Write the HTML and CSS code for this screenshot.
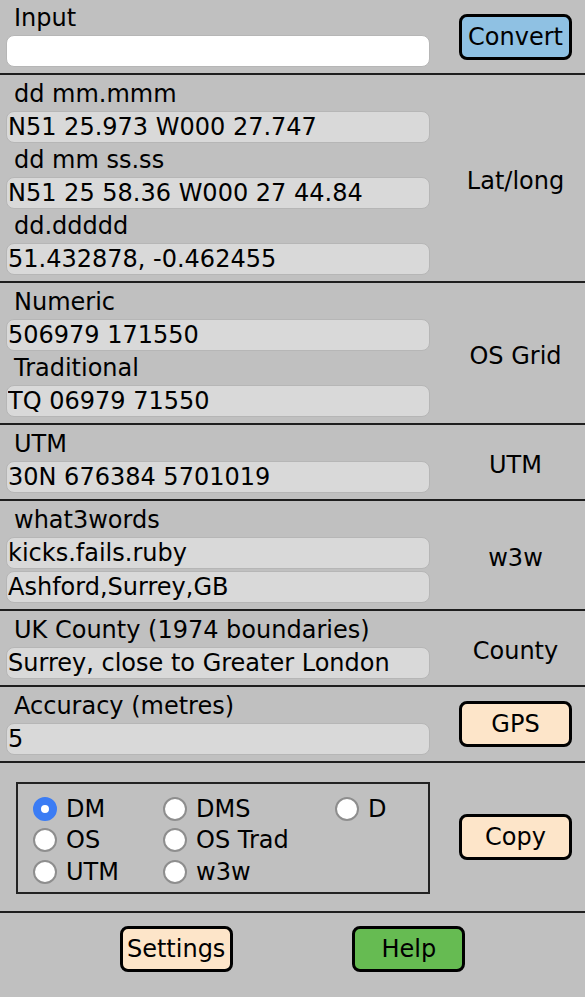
FILE: index.html
```html
<!DOCTYPE html>
<html>
  <head>
    <title>Grid Reference Converter</title>
    <meta charset="utf-8">
    <link rel="stylesheet" href="styles.css">
  </head>
  <body>
    <div class="app">
      <div class="row first">
        <div class="fields">
          <div class="cap">Input</div>
          <input class="field blank" type="text" value="">
        </div>
        <div class="side"><button class="btn convert">Convert</button></div>
      </div>

      <div class="row">
        <div class="fields">
          <div class="cap">dd mm.mmm</div>
          <input class="field" type="text" value="N51 25.973 W000 27.747" readonly>
          <div class="cap">dd mm ss.ss</div>
          <input class="field" type="text" value="N51 25 58.36 W000 27 44.84" readonly>
          <div class="cap">dd.ddddd</div>
          <input class="field" type="text" value="51.432878, -0.462455" readonly>
        </div>
        <div class="side name">Lat/long</div>
      </div>

      <div class="row">
        <div class="fields">
          <div class="cap">Numeric</div>
          <input class="field" type="text" value="506979 171550" readonly>
          <div class="cap">Traditional</div>
          <input class="field" type="text" value="TQ 06979 71550" readonly>
        </div>
        <div class="side name">OS Grid</div>
      </div>

      <div class="row">
        <div class="fields">
          <div class="cap">UTM</div>
          <input class="field" type="text" value="30N 676384 5701019" readonly>
        </div>
        <div class="side name">UTM</div>
      </div>

      <div class="row">
        <div class="fields">
          <div class="cap">what3words</div>
          <input class="field" type="text" value="kicks.fails.ruby" readonly>
          <input class="field near" type="text" value="Ashford,Surrey,GB" readonly>
        </div>
        <div class="side name">w3w</div>
      </div>

      <div class="row">
        <div class="fields">
          <div class="cap">UK County (1974 boundaries)</div>
          <input class="field" type="text" value="Surrey, close to Greater London" readonly>
        </div>
        <div class="side name">County</div>
      </div>

      <div class="row">
        <div class="fields">
          <div class="cap">Accuracy (metres)</div>
          <input class="field" type="text" value="5" readonly>
        </div>
        <div class="side"><button class="btn peach">GPS</button></div>
      </div>

      <div class="row copyrow">
        <div class="fields">
          <div class="choices">
            <label class="opt"><input type="radio" name="fmt" checked>DM</label>
            <label class="opt"><input type="radio" name="fmt">DMS</label>
            <label class="opt"><input type="radio" name="fmt">D</label>
            <label class="opt"><input type="radio" name="fmt">OS</label>
            <label class="opt"><input type="radio" name="fmt">OS Trad</label>
            <span></span>
            <label class="opt"><input type="radio" name="fmt">UTM</label>
            <label class="opt"><input type="radio" name="fmt">w3w</label>
          </div>
        </div>
        <div class="side"><button class="btn peach">Copy</button></div>
      </div>

      <div class="footer">
        <button class="btn peach">Settings</button>
        <button class="btn help">Help</button>
      </div>
    </div>
  </body>
</html>
```

FILE: styles.css
```css
* {
  font-family: "DejaVu Sans", Verdana, sans-serif;
  box-sizing: border-box;
}

body {
  margin: 0;
  background-color: #c0c0c0;
  color: #000;
}

.app {
  width: 585px;
}

.row {
  display: grid;
  grid-template-columns: 446px 1fr;
  border-bottom: 2px solid #1e1e1e;
}

.fields {
  display: flex;
  flex-direction: column;
  padding: 2px 0 6px;
}

.first .fields {
  padding: 1px 0 6px;
}

.cap {
  font-size: 24px;
  line-height: 28px;
  padding: 3px 0 3px 14px;
}

.field {
  width: 424px;
  height: 32px;
  margin-left: 6px;
  padding: 0 0 0 1px;
  font-size: 24px;
  color: #000;
  background-color: #d9d9d9;
  border: 1px solid #b6b6b6;
  border-radius: 8px;
  outline: none;
}

.field.blank {
  background-color: #fff;
}

.field.near {
  margin-top: 2px;
}

.side {
  display: flex;
  align-items: center;
  justify-content: center;
  font-size: 24px;
}

.side.name {
  padding-top: 5px;
}

.btn {
  width: 113px;
  height: 46px;
  padding: 0;
  font-size: 24px;
  color: #000;
  border: 3px solid #000;
  border-radius: 8px;
}

.convert {
  background-color: #8fc1e3;
}

.peach {
  background-color: #fde5c9;
}

.help {
  background-color: #66bb52;
}

/* format picker for the copy button */
.copyrow .fields {
  padding: 19px 0 17px;
}

.choices {
  margin-left: 16px;
  width: 414px;
  height: 112px;
  border: 2px solid #222;
  padding: 9px 0 0 15px;
  display: grid;
  grid-template-columns: 130px 172px auto;
  grid-auto-rows: 31.5px;
}

.opt {
  display: flex;
  align-items: center;
  font-size: 24px;
}

.opt input {
  appearance: none;
  -webkit-appearance: none;
  width: 24px;
  height: 24px;
  margin: 0 9px 0 0;
  border: 2px solid #8e8e8e;
  border-radius: 50%;
  background-color: #fff;
}

.opt input:checked {
  border: 8px solid #3b7cf4;
  background-color: #fff;
}

.footer {
  display: flex;
  justify-content: space-evenly;
  padding-top: 13px;
  height: 82px;
}
```
